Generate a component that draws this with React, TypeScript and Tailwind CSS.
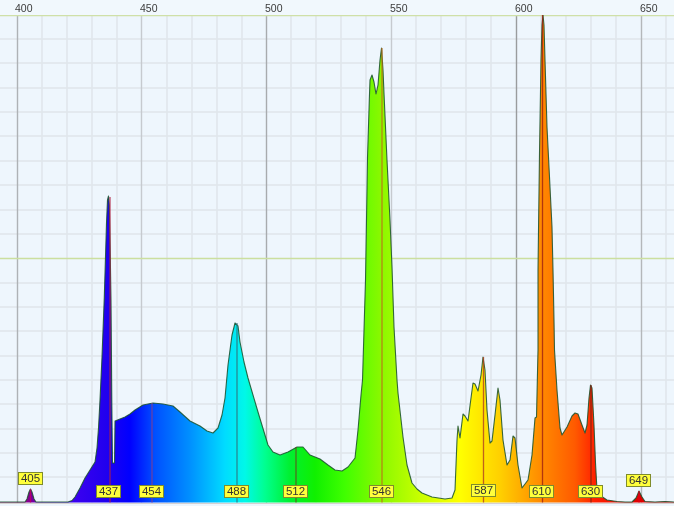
const BASE = 502.5;

// spectrum outline in page pixels, left to right
const curve: [number, number][] = [
  [0, 502], [25, 502], [27, 499], [29, 492], [30.5, 489], [32, 492], [34, 499], [36, 502], [68, 502], [72, 500.5],
  [75, 497], [80, 488], [85, 478], [90, 470], [95, 462], [97, 448], [98.5, 428], [100, 400], [102, 357], [104.3, 297],
  [106.5, 223], [107.5, 200], [108.5, 196], [109.3, 205], [110, 240], [111, 300], [111.8, 400], [112.5, 463],
  [114.5, 463], [115, 421], [120, 419], [125, 417], [130, 414], [135, 410], [143, 405], [153, 403], [163, 404], [173, 406],
  [180, 412], [190, 421], [200, 426], [207, 431], [213, 433], [218, 428], [222, 415], [225, 398], [228, 365], [232, 335],
  [235, 323], [238, 326], [240, 342], [244, 362], [248, 378], [258, 412], [268, 445], [273, 452], [280, 455],
  [288, 452], [297, 447], [303, 447], [310, 455], [320, 459], [328, 465], [335, 470], [342, 471], [348, 467], [355, 458],
  [358, 430], [361, 395], [362.5, 380], [364, 330], [365.5, 280], [366.5, 220], [367.5, 158], [369.3, 100], [370, 80], [372, 75],
  [374, 82], [376, 94], [378, 85], [380, 60], [381.5, 48], [383, 70], [384.3, 100], [387, 160], [390, 220], [392, 267],
  [394, 327], [397, 380], [398, 393], [403, 437], [407, 465], [412, 483], [417, 489], [422, 493], [432, 497], [445, 499],
  [452, 498], [455, 490], [456, 465], [457, 440], [458, 426], [460, 438], [463, 414], [465, 416], [468, 421], [471, 398],
  [473, 383], [475, 384], [478, 391], [481, 375], [483, 357], [485, 370], [487, 410], [490, 443], [492, 441], [495, 415],
  [498, 388], [500, 400], [503, 440], [507, 465], [510, 460], [513, 436], [515, 438], [518, 465], [522, 488], [528, 480],
  [532, 455], [535, 418], [536.5, 417], [538, 350], [538, 270], [539.5, 153], [541, 60], [542, 25], [543, 15], [544, 25],
  [545, 60], [547, 127], [550, 187], [552, 227], [553, 270], [554, 320], [554.5, 350], [557, 390], [560, 428],
  [562, 435], [567, 427], [572, 416], [575, 413], [578, 414], [582, 425], [585, 433], [587, 425], [589, 398], [590.5, 385],
  [592, 388], [594, 425], [595.5, 463], [597, 490], [601, 496], [607, 500], [617, 501.5], [625, 502], [632, 502], [636, 498],
  [639, 491], [642, 497], [645, 501.5], [655, 502], [665, 501.5], [674, 502],
];

const hLines = [39, 63, 88, 112, 136, 161, 185, 210, 234, 283, 307, 331, 356, 380, 404, 429, 453, 477];
const vLines = [42, 67, 92, 117, 167, 192, 217, 242, 291, 316, 341, 366, 416, 441, 466, 491, 541, 566, 591, 616, 666];

const axis = [
  { nm: 400, x: 17.5, grid: "#aeb2b6" },
  { nm: 450, x: 141.5, grid: "#c6cacf" },
  { nm: 500, x: 266.5, grid: "#a8abae" },
  { nm: 550, x: 391.5, grid: "#c6cacf" },
  { nm: 600, x: 516.5, grid: "#9a9c9e" },
  { nm: 650, x: 641.5, grid: "#b4b7ba" },
];

const peaks = [
  { nm: 405, x: 30.5, top: 489, color: "#c00060", pos: "left-[18px] top-[472px]" },
  { nm: 437, x: 110, top: 197, color: "#b02040", pos: "left-[96px] top-[485px]" },
  { nm: 454, x: 152, top: 403, color: "#804090", pos: "left-[139px] top-[485px]" },
  { nm: 488, x: 237, top: 323, color: "#307080", pos: "left-[224px] top-[485px]" },
  { nm: 512, x: 296, top: 447, color: "#605020", pos: "left-[283px] top-[485px]" },
  { nm: 546, x: 382, top: 48, color: "#c06a18", pos: "left-[369px] top-[485px]" },
  { nm: 587, x: 483.5, top: 357, color: "#b04020", pos: "left-[471px] top-[484px]" },
  { nm: 610, x: 542.5, top: 15, color: "#a02010", pos: "left-[529px] top-[485px]" },
  { nm: 630, x: 591, top: 385, color: "#802010", pos: "left-[578px] top-[485px]" },
  { nm: 649, x: 639, top: 491, color: "#e00020", pos: "left-[626px] top-[474px]" },
];

const stops: [number, string][] = [
  [20, "#a00070"], [40, "#6000c0"], [75, "#3a00f0"], [105, "#2200ee"], [130, "#0000ff"], [155, "#0050ff"],
  [190, "#0090ff"], [225, "#00dcff"], [245, "#00f8e8"], [265, "#00ff90"], [290, "#00f030"], [315, "#10f000"],
  [345, "#40ff00"], [380, "#88f800"], [420, "#c8ff00"], [460, "#ffff00"], [500, "#ffd000"], [540, "#ff8c00"],
  [575, "#ff5a00"], [595, "#ff2000"], [640, "#e00000"],
];

const outline = curve.map(([x, y]) => `${x},${y}`).join(" ");
const area = `0,${BASE} ${outline} 674,${BASE}`;

export default function App() {
  return (
    <div className="relative w-[674px] h-[506px] overflow-hidden bg-[#eef6fd] text-[#3c3c3c] blur-[0.3px] font-['Liberation_Sans',Arial,sans-serif]">
      <div className="flex h-[15px] pl-[15px] pt-[2px] bg-[#f1f8fd]">
        {axis.map((a) => (
          <span key={a.nm} className="w-[125px] shrink-0 text-[10.5px] leading-[12px]">
            {a.nm}
          </span>
        ))}
      </div>

      <svg width={674} height={491} viewBox="0 15 674 491" className="block">
        <defs>
          <linearGradient id="spectrum" gradientUnits="userSpaceOnUse" x1="0" y1="0" x2="674" y2="0">
            {stops.map(([x, c]) => (
              <stop key={x} offset={x / 674} stopColor={c} />
            ))}
          </linearGradient>
        </defs>

        {hLines.map((y) => (
          <line key={y} x1={0} x2={674} y1={y} y2={y} stroke="#dfe5ea" strokeWidth={1.6} />
        ))}
        {vLines.map((x) => (
          <line key={x} x1={x} x2={x} y1={15} y2={BASE} stroke="#e0e6ec" strokeWidth={1.6} />
        ))}
        {axis.map((a) => (
          <line key={a.nm} x1={a.x} x2={a.x} y1={15} y2={BASE} stroke={a.grid} strokeWidth={1.4} />
        ))}
        <line x1={0} x2={674} y1={15.5} y2={15.5} stroke="#cfe0a8" strokeWidth={1.6} />
        <line x1={0} x2={674} y1={258.5} y2={258.5} stroke="#cbdf9f" strokeWidth={1.6} />

        <polygon points={area} fill="url(#spectrum)" />
        <polyline points={outline} fill="none" stroke="#17502c" strokeOpacity={0.85} strokeWidth={1.1} strokeLinejoin="round" />

        {peaks.map((p) => (
          <line key={p.nm} x1={p.x} x2={p.x} y1={p.top} y2={BASE} stroke={p.color} strokeOpacity={0.8} strokeWidth={1.3} />
        ))}
        <line x1={0} x2={674} y1={503.5} y2={503.5} stroke="#d6d0d0" strokeWidth={1.2} />
      </svg>

      {peaks.map((p) => (
        <span
          key={p.nm}
          className={`absolute ${p.pos} w-[25px] h-[13px] flex items-center justify-center bg-[#ffff3c] border border-[#7f8c2c] text-[11.5px] leading-none text-[#333]`}
        >
          {p.nm}
        </span>
      ))}
    </div>
  );
}
